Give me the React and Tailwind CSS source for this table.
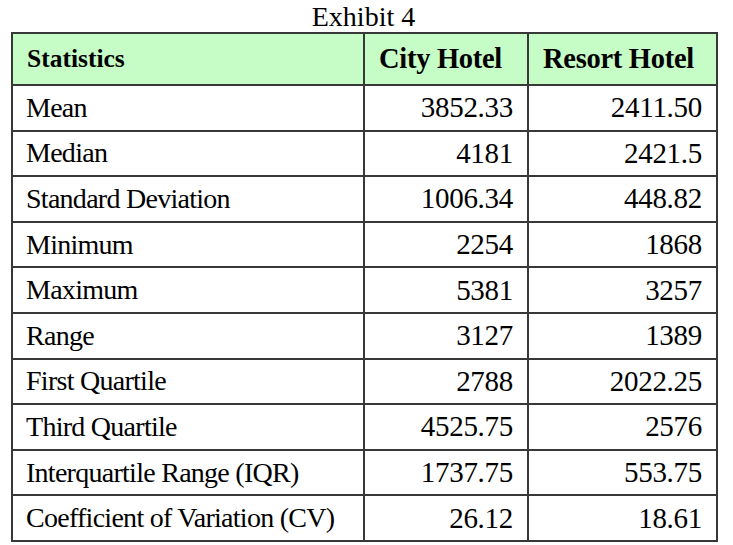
const rows = [
  ["Mean", "3852.33", "2411.50"],
  ["Median", "4181", "2421.5"],
  ["Standard Deviation", "1006.34", "448.82"],
  ["Minimum", "2254", "1868"],
  ["Maximum", "5381", "3257"],
  ["Range", "3127", "1389"],
  ["First Quartile", "2788", "2022.25"],
  ["Third Quartile", "4525.75", "2576"],
  ["Interquartile Range (IQR)", "1737.75", "553.75"],
  ["Coefficient of Variation (CV)", "26.12", "18.61"],
];

const cell = "border-2 border-[#383838] px-[14px]";

export default function App() {
  return (
    <div className="w-[733px] h-[545px] bg-white overflow-hidden font-['Liberation_Serif','Times_New_Roman',serif] text-black">
      <div className="pl-[11px] pt-[1px]">
        <div className="w-[705px] text-center text-[28px] leading-[31px]">Exhibit 4</div>

        <table className="w-[705px] border-collapse table-fixed">
          <colgroup>
            <col className="w-[352px]" />
            <col className="w-[164px]" />
            <col className="w-[189px]" />
          </colgroup>
          <thead>
            <tr className="h-[52px] bg-[#c6fcc6]">
              <th className={`${cell} text-left text-[25.5px] font-bold`}>Statistics</th>
              <th className={`${cell} text-left text-[28.5px] font-bold tracking-[-0.01em]`}>City Hotel</th>
              <th className={`${cell} text-left text-[28.5px] font-bold tracking-[-0.01em]`}>Resort Hotel</th>
            </tr>
          </thead>
          <tbody>
            {rows.map(([label, city, resort]) => (
              <tr key={label} className="h-[45.6px]">
                <td className={`${cell} !pl-[13px] text-left text-[28px] leading-none tracking-[-0.026em]`}>
                  {label}
                </td>
                <td className={`${cell} text-right text-[29px] leading-none tracking-[-0.01em]`}>{city}</td>
                <td className={`${cell} text-right text-[29px] leading-none tracking-[-0.01em]`}>{resort}</td>
              </tr>
            ))}
          </tbody>
        </table>
      </div>
    </div>
  );
}
